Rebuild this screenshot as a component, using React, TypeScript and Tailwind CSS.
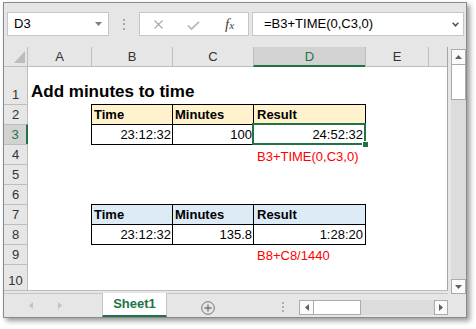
import React from "react";

type Col = { l: string; w: string; sel?: boolean };

const cols: Col[] = [
  { l: "A", w: "w-[64px]" },
  { l: "B", w: "w-[81px]" },
  { l: "C", w: "w-[81px]" },
  { l: "D", w: "w-[112px]", sel: true },
  { l: "E", w: "w-[63px]" },
  { l: "", w: "w-[19px]" },
];

const rows: { n: string; h: string; top: boolean; sel?: boolean }[] = [
  { n: "1", h: "h-[37px]", top: false },
  { n: "2", h: "h-[20px]", top: true },
  { n: "3", h: "h-[20px]", top: true, sel: true },
  { n: "4", h: "h-[20px]", top: true },
  { n: "5", h: "h-[20px]", top: true },
  { n: "6", h: "h-[20px]", top: true },
  { n: "7", h: "h-[20px]", top: true },
  { n: "8", h: "h-[20px]", top: true },
  { n: "9", h: "h-[20px]", top: true },
  { n: "10", h: "h-[26px]", top: true },
];

function DataTable({
  bg,
  values,
  selected,
}: {
  bg: string;
  values: [string, string, string];
  selected?: boolean;
}) {
  return (
    <div className="ml-[63px] w-[275px] flex flex-col text-black">
      <div className="flex h-[20px] font-bold leading-[19px]">
        <div className={`w-[81px] border-l border-t border-black pl-[2px] ${bg}`}>Time</div>
        <div className={`w-[81px] border-l border-t border-black pl-[2px] ${bg}`}>Minutes</div>
        <div className={`w-[113px] border-l border-r border-t border-black pl-[3px] ${bg}`}>Result</div>
      </div>
      <div className="flex h-[21px] leading-[19px]">
        <div className="w-[81px] border-l border-t border-b border-black pr-[1px] text-right">{values[0]}</div>
        <div className="w-[81px] border-l border-t border-b border-black pr-[1px] text-right">{values[1]}</div>
        <div className="relative w-[113px] border-l border-r border-t border-b border-black pr-[2px] text-right">
          {values[2]}
          {selected && (
            <>
              <div className="absolute -left-[2px] -top-[2px] -right-[1px] -bottom-[1px] border-2 border-[#217346] z-10" />
              <div className="absolute -right-[3px] -bottom-[3px] w-[6px] h-[6px] bg-[#217346] border-l border-t border-white z-20" />
            </>
          )}
        </div>
      </div>
    </div>
  );
}

export default function App() {
  return (
    <div className="w-[476px] h-[329px] bg-white pl-[3px] pt-[2px] font-['Liberation_Sans',Arial,sans-serif] text-[13px] text-[#1a1a1a]">
      <div className="w-[464px] h-[316px] border border-[#8a8a8a] bg-[#e6e6e6] shadow-[3px_3px_5px_rgba(0,0,0,0.4)] flex flex-col overflow-visible">
        {/* Formula bar */}
        <div className="h-[44px] shrink-0 flex items-start pt-[9px]">
          <div className="ml-[3px] w-[102px] h-[24px] bg-white border border-[#c6c6c6] flex items-center justify-between pl-[6px] pr-[6px]">
            <span className="leading-[22px] text-black">D3</span>
            <svg width="7" height="4" viewBox="0 0 7 4">
              <polygon points="0,0 7,0 3.5,4" fill="#7f7f7f" />
            </svg>
          </div>
          <div className="w-[30px] h-[24px] flex flex-col items-center justify-center gap-[2.5px]">
            <div className="w-[2px] h-[2px] bg-[#a8a8a8]" />
            <div className="w-[2px] h-[2px] bg-[#a8a8a8]" />
            <div className="w-[2px] h-[2px] bg-[#a8a8a8]" />
          </div>
          <div className="w-[110px] h-[24px] bg-white border border-[#c6c6c6] flex items-center">
            <svg className="ml-[14px]" width="9" height="9" viewBox="0 0 9 9">
              <path d="M0.5 0.5 L8.5 8.5 M8.5 0.5 L0.5 8.5" stroke="#a8a8a8" strokeWidth="1.1" fill="none" />
            </svg>
            <svg className="ml-[24px] mt-[2px]" width="13" height="9" viewBox="0 0 13 9">
              <polyline points="1,4.5 4.5,8 12,0.8" stroke="#b4b4b4" strokeWidth="1.7" fill="none" />
            </svg>
            <span className="ml-[25px] font-['Liberation_Serif',serif] italic text-[15px] leading-[22px] text-[#444]">
              f<span className="text-[11px]">x</span>
            </span>
          </div>
          <div className="ml-[3px] w-[212px] h-[24px] bg-white border border-[#c6c6c6] flex items-center justify-between pl-[11px] pr-[4px]">
            <span className="leading-[22px] text-black">=B3+TIME(0,C3,0)</span>
            <svg width="7" height="5" viewBox="0 0 7 5">
              <polyline points="0.7,0.7 3.5,3.8 6.3,0.7" stroke="#555" strokeWidth="1.6" fill="none" />
            </svg>
          </div>
        </div>

        {/* Main area */}
        <div className="flex flex-1">
          {/* Grid + tab bar */}
          <div className="w-[444px] flex flex-col">
            {/* Column headers */}
            <div className="flex h-[20px] shrink-0">
              <div className="w-[23px] h-full border-b border-[#bdbdbd]">
                <svg width="23" height="19" viewBox="0 0 23 19">
                  <polygon points="10,16 21,16 21,4" fill="#bcbcbc" />
                </svg>
              </div>
              {cols.map((c, i) =>
                c.sel ? (
                  <div
                    key={i}
                    className={`${c.w} h-full border-l border-[#bdbdbd] border-b-2 border-b-[#217346] bg-[#d2d2d2] text-[#217346] text-center leading-[19px]`}
                  >
                    {c.l}
                  </div>
                ) : (
                  <div
                    key={i}
                    className={`${c.w} h-full border-l border-b border-[#bdbdbd] text-[#333] text-center leading-[19px]`}
                  >
                    {c.l}
                  </div>
                )
              )}
              <div className="w-px h-full bg-[#a6a6a6]" />
            </div>

            {/* Body */}
            <div className="flex h-[224px] shrink-0 border-b border-[#bdbdbd]">
              <div className="w-[24px] flex flex-col">
                {rows.map((r) => (
                  <div
                    key={r.n}
                    className={`${r.h} w-full flex items-end justify-center leading-[19px] ${
                      r.top ? "border-t border-t-[#bdbdbd]" : ""
                    } ${
                      r.sel
                        ? "bg-[#d2d2d2] text-[#217346] border-r-2 border-r-[#217346]"
                        : "text-[#333] border-r border-r-[#bdbdbd]"
                    }`}
                  >
                    {r.n}
                  </div>
                ))}
              </div>
              <div className="w-[420px] h-full bg-white border-r border-[#a6a6a6] flex flex-col">
                <div className="h-[37px] shrink-0 pl-[3px] pt-[15px] text-[17px] leading-[20px] font-bold text-black">
                  Add minutes to time
                </div>
                <DataTable bg="bg-[#fff2cc]" values={["23:12:32", "100", "24:52:32"]} selected />
                <div className="h-[59px] shrink-0 pl-[229px] pt-[5px] leading-[14px] text-[#ff0000]">
                  B3+TIME(0,C3,0)
                </div>
                <DataTable bg="bg-[#ddebf7]" values={["23:12:32", "135.8", "1:28:20"]} />
                <div className="flex-1 pl-[229px] pt-[4px] leading-[14px] text-[#ff0000]">B8+C8/1440</div>
              </div>
            </div>

            {/* Tab bar */}
            <div className="h-[26px] shrink-0 pt-[2px]">
              <div className="flex h-[24px]">
                <div className="w-[98px] h-full border-t border-[#c6c6c6] flex items-center">
                  <svg className="ml-[25px]" width="4" height="7" viewBox="0 0 4 7">
                    <polygon points="4,0 4,7 0,3.5" fill="#c2c2c2" />
                  </svg>
                  <svg className="ml-[25px]" width="4" height="7" viewBox="0 0 4 7">
                    <polygon points="0,0 0,7 4,3.5" fill="#c2c2c2" />
                  </svg>
                </div>
                <div className="w-[65px] h-full bg-white border-l border-r border-[#c6c6c6] border-b-2 border-b-[#217346] flex items-center justify-center font-bold text-[#217346] leading-[20px]">
                  Sheet1
                </div>
                <div className="flex-1 h-full border-t border-[#c6c6c6] flex items-start">
                  <svg className="ml-[34px] mt-[7px]" width="14" height="14" viewBox="0 0 14 14">
                    <circle cx="7" cy="7" r="6.3" stroke="#737373" strokeWidth="1" fill="none" />
                    <path d="M7 3.5 V10.5 M3.5 7 H10.5" stroke="#737373" strokeWidth="1.3" />
                  </svg>
                  <div className="ml-[67px] mt-[8px] flex flex-col gap-[2px]">
                    <div className="w-[2px] h-[2px] bg-[#b0b0b0]" />
                    <div className="w-[2px] h-[2px] bg-[#b0b0b0]" />
                    <div className="w-[2px] h-[2px] bg-[#b0b0b0]" />
                  </div>
                  <div className="ml-[15px] mt-[6px] w-[149px] h-[15px] flex">
                    <div className="w-[15px] h-full bg-[#fafafa] border border-[#ababab] flex items-center justify-center">
                      <svg width="4" height="7" viewBox="0 0 4 7">
                        <polygon points="4,0 4,7 0,3.5" fill="#606060" />
                      </svg>
                    </div>
                    <div className="w-[47px] h-full bg-white border-y border-r border-[#ababab]" />
                    <div className="flex-1 h-full bg-[#dcdcdc]" />
                    <div className="w-[14px] h-full bg-[#fafafa] border border-[#ababab] flex items-center justify-center">
                      <svg width="4" height="7" viewBox="0 0 4 7">
                        <polygon points="0,0 0,7 4,3.5" fill="#606060" />
                      </svg>
                    </div>
                  </div>
                </div>
              </div>
            </div>
          </div>

          {/* Vertical scrollbar */}
          <div className="w-[18px] pl-[3px] pt-[2px] flex flex-col">
            <div className="w-[15px] h-[16px] bg-[#fafafa] border border-[#ababab] flex items-center justify-center">
              <svg width="7" height="4" viewBox="0 0 7 4">
                <polygon points="0,4 7,4 3.5,0" fill="#606060" />
              </svg>
            </div>
            <div className="w-[15px] h-[35px] bg-white border-x border-b border-[#ababab]" />
            <div className="w-[15px] h-[179px] bg-[#dcdcdc]" />
            <div className="w-[15px] h-[15px] bg-[#fafafa] border border-[#ababab] flex items-center justify-center">
              <svg width="7" height="4" viewBox="0 0 7 4">
                <polygon points="0,0 7,0 3.5,4" fill="#606060" />
              </svg>
            </div>
          </div>
        </div>
      </div>
    </div>
  );
}
